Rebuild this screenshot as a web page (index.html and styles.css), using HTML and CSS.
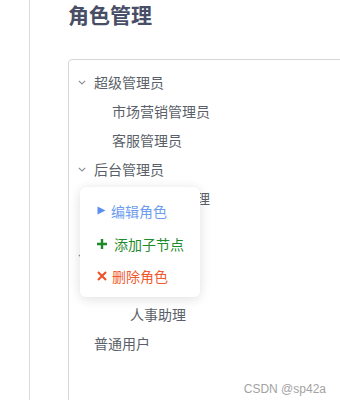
FILE: index.html
```html
<!DOCTYPE html>
<html lang="zh">
<head>
<meta charset="utf-8">
<link rel="stylesheet" href="styles.css">
</head>
<body>
<div class="page">
  <div class="rail"></div>
  <div class="main">
    <h1 class="title">角色管理</h1>
    <div class="panel">
      <ul class="tree">
        <li class="row l1"><span class="exp"><svg width="8" height="5" viewBox="0 0 8 5"><path d="M0.8 0.8 L4 4 L7.2 0.8" fill="none" stroke="#8b909a" stroke-width="1.2"/></svg></span><span class="label">超级管理员</span></li>
        <li class="row l2"><span class="exp"></span><span class="label">市场营销管理员</span></li>
        <li class="row l2"><span class="exp"></span><span class="label">客服管理员</span></li>
        <li class="row l1"><span class="exp"><svg width="8" height="5" viewBox="0 0 8 5"><path d="M0.8 0.8 L4 4 L7.2 0.8" fill="none" stroke="#8b909a" stroke-width="1.2"/></svg></span><span class="label">后台管理员</span></li>
        <li class="row l2"><span class="exp"></span><span class="label">系统运维总管理</span></li>
        <li class="row l2"><span class="exp"></span><span class="label">内容管理员</span></li>
        <li class="row l1"><span class="exp"><svg width="8" height="5" viewBox="0 0 8 5"><path d="M0.8 0.8 L4 4 L7.2 0.8" fill="none" stroke="#8b909a" stroke-width="1.2"/></svg></span><span class="label">运营管理员</span></li>
        <li class="row l2"><span class="exp"></span><span class="label">行政管理员</span></li>
        <li class="row l3"><span class="exp"></span><span class="label">人事助理</span></li>
        <li class="row l1"><span class="exp"></span><span class="label">普通用户</span></li>
      </ul>
    </div>
  </div>
  <div class="menu">
    <div class="item edit"><svg class="ico" width="9" height="9" viewBox="0 0 9 9"><path d="M0.5 0.5 L8.5 4.5 L0.5 8.5 Z" fill="#5b8ef0"/></svg><span>编辑角色</span></div>
    <div class="item add"><svg class="ico" width="10" height="10" viewBox="0 0 10 10"><path d="M5 0 V10 M0 5 H10" stroke="#1b8a27" stroke-width="2.4"/></svg><span>添加子节点</span></div>
    <div class="item del"><svg class="ico" width="10" height="10" viewBox="0 0 10 10"><path d="M1 1 L9 9 M9 1 L1 9" stroke="#f0502a" stroke-width="2.1"/></svg><span>删除角色</span></div>
  </div>
  <div class="mark">CSDN @sp42a</div>
</div>
</body>
</html>
```
FILE: styles.css
```css
html, body {
  margin: 0;
  padding: 0;
  background: #fff;
}
.page {
  position: relative;
  display: flex;
  width: 340px;
  height: 400px;
  overflow: hidden;
  font-family: "Noto Sans CJK SC", "Noto Sans", sans-serif;
}
.rail {
  width: 29px;
  flex: none;
  border-right: 1px solid #dcdcdc;
}
.main {
  flex: 1;
  display: flex;
  flex-direction: column;
  padding-left: 38px;
}
.title {
  margin: 0;
  font-size: 21px;
  line-height: 28px;
  font-weight: 700;
  color: #474e66;
}
.panel {
  flex: 1;
  margin-top: 31px;
  margin-right: -12px;
  margin-bottom: -12px;
  border: 1px solid #d6d6d6;
  border-radius: 4px;
  padding-top: 7px;
}
.tree {
  list-style: none;
  margin: 0;
  padding: 0;
}
.row {
  display: flex;
  align-items: center;
  height: 29px;
  font-size: 14px;
  color: #5b5f69;
}
.l2 { padding-left: 18px; }
.l3 { padding-left: 36px; }
.exp {
  width: 25px;
  flex: none;
  display: flex;
  justify-content: center;
  align-items: center;
  padding-top: 2px;
}
.menu {
  position: absolute;
  left: 80px;
  top: 187px;
  width: 120px;
  padding: 7px 0 6px;
  background: #fff;
  border-radius: 6px;
  box-shadow: 0 2px 12px rgba(0, 0, 0, 0.13);
}
.item {
  display: flex;
  align-items: center;
  height: 33px;
  padding-left: 17px;
  font-size: 14px;
}
.add { height: 34px; }
.del { height: 30px; }
.ico { flex: none; }
.edit span { margin-left: 5px; color: #6e9df0; }
.add span { margin-left: 7px; color: #1e8c2a; }
.del span { margin-left: 5px; color: #f05a30; }
.mark {
  position: absolute;
  right: 14px;
  bottom: 4px;
  font-family: "Liberation Sans", Arial, sans-serif;
  font-size: 12px;
  color: #a3a3a3;
}
```
